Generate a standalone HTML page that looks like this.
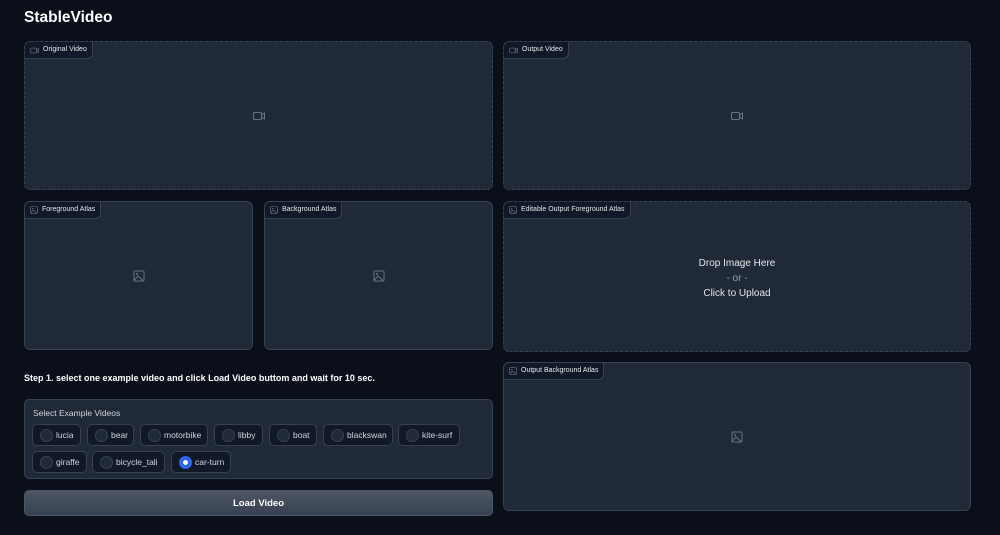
<!DOCTYPE html><html><head><style>
*{box-sizing:border-box;margin:0;padding:0}
body{width:1000px;height:535px;background:#0b0f19;font-family:"Liberation Sans",sans-serif;color:#e5e7eb;position:relative;overflow:hidden}
.t{position:absolute;left:24px;top:9px;font-size:15.5px;font-weight:bold;color:#fff}
.box{position:absolute;background:#1f2937;border:1px dashed #374151;border-radius:6px}
.solid{border-style:solid}
.lab{position:absolute;left:0;top:0;height:17px;padding:0 5px 0 5px;background:#111827;border:1px solid #374151;border-top:none;border-left:none;border-radius:6px 0 6px 0;font-size:7px;line-height:16px;color:#e5e7eb;display:flex;align-items:center;gap:4px}
.ic{position:absolute;left:50%;top:50%;transform:translate(-50%,-50%)}
.r{position:absolute;height:22px;background:#111827;border:1px solid #374151;border-radius:5px;font-size:8.5px;line-height:20px;color:#d1d5db;padding-left:23px}
.r:before{content:"";position:absolute;left:7px;top:4px;width:11px;height:11px;border-radius:50%;background:#1f2937;border:1px solid #374151}
.r.on:before{background:#fff;border-color:#2563eb;box-shadow:inset 0 0 0 3px #2563eb}
</style></head><body>
<div class="t">StableVideo</div>
<svg width="0" height="0" style="position:absolute"><defs>
<g id="v"><rect x="1" y="2.5" width="8" height="7" rx="1" fill="none" stroke="#6b7280" stroke-width="1"/><path d="M9 5l3-2v6l-3-2" fill="none" stroke="#6b7280" stroke-width="1"/></g>
<g id="im"><rect x="1" y="1" width="10" height="10" rx="1" fill="none" stroke="#6b7280" stroke-width="1"/><circle cx="4" cy="4" r="1" fill="#6b7280"/><path d="M1.5 10l3.5-4 5 4.5" fill="none" stroke="#6b7280" stroke-width="1"/></g>
</defs></svg>
<div class="box" style="left:24px;top:41px;width:469px;height:149px"><div class="lab"><svg width="9" height="9" viewBox="0 0 13 12"><use href="#v"/></svg>Original Video</div><svg class="ic" width="14" height="12" viewBox="0 0 13 12"><use href="#v"/></svg></div>
<div class="box" style="left:503px;top:41px;width:468px;height:149px"><div class="lab"><svg width="9" height="9" viewBox="0 0 13 12"><use href="#v"/></svg>Output Video</div><svg class="ic" width="14" height="12" viewBox="0 0 13 12"><use href="#v"/></svg></div>
<div class="box solid" style="left:24px;top:201px;width:229px;height:149px"><div class="lab"><svg width="8" height="8" viewBox="0 0 12 12"><use href="#im"/></svg>Foreground Atlas</div><svg class="ic" width="12" height="12" viewBox="0 0 12 12"><use href="#im"/></svg></div>
<div class="box solid" style="left:264px;top:201px;width:229px;height:149px"><div class="lab"><svg width="8" height="8" viewBox="0 0 12 12"><use href="#im"/></svg>Background Atlas</div><svg class="ic" width="12" height="12" viewBox="0 0 12 12"><use href="#im"/></svg></div>
<div class="box" style="left:503px;top:201px;width:468px;height:151px"><div class="lab"><svg width="8" height="8" viewBox="0 0 12 12"><use href="#im"/></svg>Editable Output Foreground Atlas</div><div style="position:absolute;left:0;right:0;top:54px;text-align:center;font-size:10px;line-height:15px;color:#e5e7eb">Drop Image Here<br><span style="color:#9ca3af">- or -</span><br>Click to Upload</div></div>
<div class="box solid" style="left:503px;top:362px;width:468px;height:149px"><div class="lab"><svg width="8" height="8" viewBox="0 0 12 12"><use href="#im"/></svg>Output Background Atlas</div><svg class="ic" width="12" height="12" viewBox="0 0 12 12"><use href="#im"/></svg></div>
<div style="position:absolute;left:24px;top:373px;font-size:9px;font-weight:bold;color:#fff">Step 1. select one example video and click Load Video buttom and wait for 10 sec.</div>
<div class="box solid" style="left:24px;top:399px;width:469px;height:80px;border-radius:5px">
<div style="position:absolute;left:8px;top:8px;font-size:8.5px;color:#d1d5db">Select Example Videos</div></div>
<div class="r" style="left:32px;top:424px;width:49px">lucia</div>
<div class="r" style="left:87px;top:424px;width:47px">bear</div>
<div class="r" style="left:140px;top:424px;width:68px">motorbike</div>
<div class="r" style="left:214px;top:424px;width:49px">libby</div>
<div class="r" style="left:269px;top:424px;width:48px">boat</div>
<div class="r" style="left:323px;top:424px;width:70px">blackswan</div>
<div class="r" style="left:398px;top:424px;width:62px">kite-surf</div>
<div class="r" style="left:32px;top:451px;width:55px">giraffe</div>
<div class="r" style="left:92px;top:451px;width:73px">bicycle_tali</div>
<div class="r on" style="left:171px;top:451px;width:60px">car-turn</div>
<div style="position:absolute;left:24px;top:490px;width:469px;height:26px;background:linear-gradient(#4b5563,#374151);border:1px solid #4b5563;border-radius:5px;text-align:center;line-height:25px;font-size:9.5px;font-weight:bold;color:#fff">Load Video</div>
</body></html>
